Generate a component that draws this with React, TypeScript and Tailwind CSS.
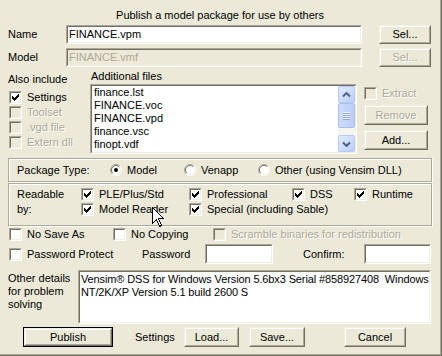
import type { ReactNode } from "react";

const dim = "text-[#ACA899] [text-shadow:1px_1px_0_#fff]";

function Check({ checked = false, disabled = false }: { checked?: boolean; disabled?: boolean }) {
  return (
    <span className="flex h-[13px] w-[13px] shrink-0 border border-t-[#ACA899] border-l-[#ACA899] border-b-white border-r-white">
      <span
        className={`flex h-full w-full items-center justify-center border border-t-[#716F64] border-l-[#716F64] border-b-[#F1EFE2] border-r-[#F1EFE2] ${
          disabled ? "bg-[#ECE9D8]" : "bg-white"
        }`}
      >
        {checked && (
          <svg width="7" height="7" viewBox="0 0 7 7" shapeRendering="crispEdges">
            <path
              d="M0 2h1v3H0zM1 3h1v3H1zM2 4h1v3H2zM3 3h1v3H3zM4 2h1v3H4zM5 1h1v3H5zM6 0h1v3H6z"
              fill="#000"
            />
          </svg>
        )}
      </span>
    </span>
  );
}

function CheckItem({
  label,
  checked,
  disabled,
  className = "",
}: {
  label: string;
  checked?: boolean;
  disabled?: boolean;
  className?: string;
}) {
  return (
    <div className={`flex items-center whitespace-nowrap ${className}`}>
      <Check checked={checked} disabled={disabled} />
      <span className={`ml-[5px] ${disabled ? dim : ""}`}>{label}</span>
    </div>
  );
}

function Radio({ label, selected = false, className = "" }: { label: string; selected?: boolean; className?: string }) {
  return (
    <div className={`flex items-center whitespace-nowrap ${className}`}>
      <svg width="12" height="12" viewBox="0 0 12 12" className="shrink-0">
        <circle cx="6" cy="6" r="5.5" fill="#fff" />
        <path d="M2.1 9.9A5.5 5.5 0 0 1 9.9 2.1" fill="none" stroke="#ACA899" />
        <path d="M2.8 9.2A4.5 4.5 0 0 1 9.2 2.8" fill="none" stroke="#716F64" />
        <path d="M9.9 2.1A5.5 5.5 0 0 1 2.1 9.9" fill="none" stroke="#fff" />
        <path d="M9.2 2.8A4.5 4.5 0 0 1 2.8 9.2" fill="none" stroke="#F1EFE2" />
        {selected && <circle cx="6" cy="6" r="2" fill="#000" />}
      </svg>
      <span className="ml-[5px]">{label}</span>
    </div>
  );
}

function Edit({
  className = "",
  disabled = false,
  top = false,
  children,
}: {
  className?: string;
  disabled?: boolean;
  top?: boolean;
  children?: ReactNode;
}) {
  return (
    <div className={`shrink-0 border border-t-[#ACA899] border-l-[#ACA899] border-b-white border-r-white ${className}`}>
      <div
        className={`flex h-full w-full overflow-hidden border border-t-[#716F64] border-l-[#716F64] border-b-[#F1EFE2] border-r-[#F1EFE2] px-[1px] ${
          top ? "items-start pt-[1px]" : "items-center"
        } ${disabled ? "bg-[#ECE9D8] text-[#ACA899]" : "bg-white"}`}
      >
        {children}
      </div>
    </div>
  );
}

function Btn({
  className = "",
  disabled = false,
  isDefault = false,
  children,
}: {
  className?: string;
  disabled?: boolean;
  isDefault?: boolean;
  children: ReactNode;
}) {
  return (
    <div className={`shrink-0 ${isDefault ? "border border-black" : ""} ${className}`}>
      <div className="h-full w-full border border-t-[#F1EFE2] border-l-[#F1EFE2] border-b-[#716F64] border-r-[#716F64]">
        <div
          className={`flex h-full w-full items-center justify-center border border-t-white border-l-white border-b-[#ACA899] border-r-[#ACA899] ${
            disabled ? dim : ""
          }`}
        >
          {children}
        </div>
      </div>
    </div>
  );
}

function ScrollArrow({ down = false }: { down?: boolean }) {
  return (
    <div className="flex h-[17px] w-[17px] items-center justify-center rounded-[2px] border border-[#B7C9F4] bg-gradient-to-br from-[#E3EBFE] to-[#B9CDF9]">
      <svg width="9" height="6" viewBox="0 0 9 6">
        <path
          d={down ? "M1 1.5L4.5 5L8 1.5" : "M1 4.5L4.5 1L8 4.5"}
          fill="none"
          stroke="#4D6185"
          strokeWidth="2"
        />
      </svg>
    </div>
  );
}

const files = ["finance.lst", "FINANCE.voc", "FINANCE.vpd", "finance.vsc", "finopt.vdf"];

export default function App() {
  return (
    <div className="relative h-[356px] w-[442px] overflow-hidden border-r border-b border-[#716F64] bg-[#ECE9D8] font-['Liberation_Sans',Arial,sans-serif] text-[11px] leading-[13px] text-black">
      <div className="flex h-full w-full flex-col border-r border-b border-[#ACA899]">
        <div className="flex h-[25px] justify-center pt-[9px]">Publish a model package for use by others</div>

        <div className="flex h-[19px] items-center">
          <span className="w-[66px] pl-[8px]">Name</span>
          <Edit className="h-[19px] w-[296px]">FINANCE.vpm</Edit>
          <Btn className="ml-[17px] h-[19px] w-[52px]">Sel...</Btn>
        </div>

        <div className="mt-[4px] flex h-[19px] items-center">
          <span className="w-[66px] pl-[8px]">Model</span>
          <Edit disabled className="h-[19px] w-[296px]">
            FINANCE.vmf
          </Edit>
          <Btn disabled className="ml-[17px] h-[19px] w-[52px]">
            Sel...
          </Btn>
        </div>

        <div className="flex h-[91px]">
          <div className="w-[90px] shrink-0 pt-[6px]">
            <div className="pl-[8px]">Also include</div>
            <div className="mt-[4px] flex flex-col pl-[9px]">
              <CheckItem className="h-[15px]" label="Settings" checked />
              <CheckItem className="h-[15px]" label="Toolset" disabled />
              <CheckItem className="h-[15px]" label=".vgd file" disabled />
              <CheckItem className="h-[15px]" label="Extern dll" disabled />
            </div>
          </div>

          <div className="w-[267px] shrink-0 pt-[3px]">
            <div className="pl-[1px]">Additional files</div>
            <div className="mt-[1px] h-[70px] border border-t-[#ACA899] border-l-[#ACA899] border-b-white border-r-white">
              <div className="flex h-full w-full border border-t-[#716F64] border-l-[#716F64] border-b-[#F1EFE2] border-r-[#F1EFE2] bg-white">
                <div className="flex-1 pl-[2px]">
                  {files.map((f) => (
                    <div key={f} className="h-[13px] whitespace-nowrap">
                      {f}
                    </div>
                  ))}
                </div>
                <div className="flex w-[17px] flex-col bg-[#F5F4EF]">
                  <ScrollArrow />
                  <div className="flex h-[25px] items-center justify-center rounded-[2px] border border-[#A9BEF0] bg-gradient-to-r from-[#CDDAFC] to-[#BCCFFA]">
                    <svg width="7" height="8" viewBox="0 0 7 8" shapeRendering="crispEdges">
                      <path d="M0 0h7v1H0zM0 2h7v1H0zM0 4h7v1H0zM0 6h7v1H0z" fill="#EEF3FF" />
                      <path d="M0 1h7v1H0zM0 3h7v1H0zM0 5h7v1H0zM0 7h7v1H0z" fill="#8CA6E6" />
                    </svg>
                  </div>
                  <div className="mt-auto">
                    <ScrollArrow down />
                  </div>
                </div>
              </div>
            </div>
          </div>

          <div className="ml-[7px] flex flex-col pt-[20px]">
            <CheckItem className="h-[13px]" label="Extract" disabled />
            <Btn disabled className="mt-[5px] h-[20px] w-[64px]">
              Remove
            </Btn>
            <Btn className="mt-[5px] h-[20px] w-[64px]">Add...</Btn>
          </div>
        </div>

        <div className="mx-[8px] flex h-[24px] items-center border border-[#ACA899] shadow-[inset_1px_1px_0_#fff,1px_1px_0_#fff]">
          <span className="w-[101px] pl-[8px]">Package Type:</span>
          <Radio className="w-[74px]" label="Model" selected />
          <Radio className="w-[74px]" label="Venapp" />
          <Radio label="Other (using Vensim DLL)" />
        </div>

        <div className="mx-[8px] mt-[1px] flex h-[43px] border border-[#ACA899] pt-[3px] shadow-[inset_1px_1px_0_#fff,1px_1px_0_#fff]">
          <div className="w-[72px] pl-[8px] leading-[15px]">
            Readable
            <br />
            by:
          </div>
          <div className="grid grid-cols-[108px_103px_62px_1fr] auto-rows-[15px]">
            <CheckItem label="PLE/Plus/Std" checked />
            <CheckItem label="Professional" checked />
            <CheckItem label="DSS" checked />
            <CheckItem label="Runtime" checked />
            <CheckItem label="Model Reader" checked />
            <CheckItem className="col-span-3" label="Special (including Sable)" checked />
          </div>
        </div>

        <div className="mt-[1px] flex h-[14px] items-center pl-[9px]">
          <CheckItem className="w-[104px]" label="No Save As" />
          <CheckItem className="w-[100px]" label="No Copying" />
          <CheckItem label="Scramble binaries for redistribution" disabled />
        </div>

        <div className="mt-[3px] flex h-[20px] items-center pl-[9px]">
          <CheckItem className="w-[133px]" label="Password Protect" />
          <span className="w-[63px]">Password</span>
          <Edit className="h-[20px] w-[68px]" />
          <span className="ml-[30px] w-[61px]">Confirm:</span>
          <Edit className="h-[20px] w-[67px]" />
        </div>

        <div className="mt-[6px] flex h-[54px]">
          <div className="w-[78px] shrink-0 pl-[8px] pt-[2px]">
            Other details
            <br />
            for problem
            <br />
            solving
          </div>
          <Edit top className="h-[54px] w-[353px]">
            <div className="whitespace-pre tracking-[-0.12px]">
              {"Vensim® DSS for Windows Version 5.6bx3 Serial #858927408  Windows\nNT/2K/XP Version 5.1 build 2600 S"}
            </div>
          </Edit>
        </div>

        <div className="mt-[3px] flex h-[20px] items-center">
          <Btn isDefault className="ml-[23px] h-[20px] w-[90px]">
            Publish
          </Btn>
          <span className="ml-[22px] w-[49px]">Settings</span>
          <Btn className="h-[20px] w-[55px]">Load...</Btn>
          <Btn className="ml-[10px] h-[20px] w-[56px]">Save...</Btn>
          <Btn className="ml-[39px] h-[20px] w-[62px]">Cancel</Btn>
        </div>
      </div>

      <svg
        className="absolute left-[152px] top-[207px]"
        width="13"
        height="21"
        viewBox="0 0 13 21"
        shapeRendering="crispEdges"
      >
        <path d="M0.5 0.5V16.5L4.5 12.5L7.5 19.5L9.5 18.5L6.5 11.5H11.5Z" fill="#fff" stroke="#000" />
      </svg>
    </div>
  );
}
